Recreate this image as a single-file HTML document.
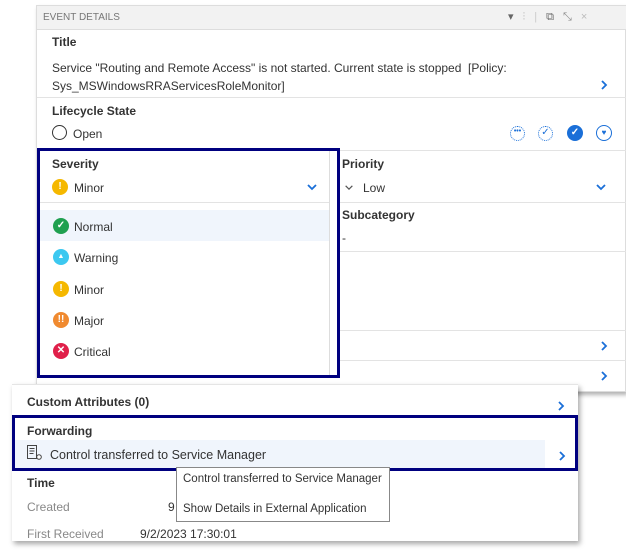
<!DOCTYPE html>
<html><head><style>
*{margin:0;padding:0;box-sizing:border-box}
body{width:626px;height:558px;background:#fff;font-family:"Liberation Sans",sans-serif;font-size:12px;color:#333;position:relative;overflow:hidden}
.abs{position:absolute}
.b{font-weight:bold}
.ic{position:absolute;width:15px;height:15px;border-radius:50%;color:#fff;font-size:10px;font-weight:bold;text-align:center;line-height:15px}
.hl{border-top:1px solid #e3e3e3}
svg.r,svg.d{position:absolute}
</style></head><body>
<svg width="0" height="0" style="position:absolute"><defs>
<symbol id="cr" viewBox="0 0 8 12"><path d="M2 2l4 4-4 4" fill="none" stroke="#1a6fd8" stroke-width="1.8"/></symbol>
<symbol id="cd" viewBox="0 0 12 8"><path d="M2 2l4 4 4-4" fill="none" stroke="#1a6fd8" stroke-width="1.8"/></symbol>
</defs></svg>
<!-- top panel -->
<div class="abs" style="left:36px;top:5px;width:590px;height:387px;background:#fff;border:1px solid #ddd;box-shadow:2px 3px 4px rgba(0,0,0,.3)"></div>
<div class="abs" style="left:37px;top:6px;width:589px;height:24px;background:#f2f2f2;border-bottom:1px solid #ddd"></div>
<div class="abs" style="left:43px;top:12px;font-size:10px;color:#777">EVENT DETAILS</div>
<div class="abs" style="left:508px;top:10px;font-size:11px;color:#666;letter-spacing:9px">▾<span style="color:#bbb">⫶</span><span style="color:#ccc">|</span>⧉<span style="color:#888">⤡</span><span style="color:#bbb">×</span></div>
<div class="abs b" style="left:52px;top:35px">Title</div>
<div class="abs" style="left:52px;top:59px;line-height:18px;width:480px">Service "Routing and Remote Access" is not started. Current state is stopped &nbsp;[Policy: Sys_MSWindowsRRAServicesRoleMonitor]</div>
<svg class="r" style="left:600px;top:79px" width="8" height="12"><use href="#cr"/></svg>
<div class="abs hl" style="left:37px;top:97px;width:589px"></div>
<div class="abs b" style="left:52px;top:104px">Lifecycle State</div>
<div class="abs" style="left:52px;top:125px;width:15px;height:15px;border:1.5px solid #333;border-radius:50%"></div>
<div class="abs" style="left:73px;top:127px">Open</div>
<div class="abs" style="left:510px;top:126px;width:15px;height:15px;border:1.5px dotted #1a6fd8;border-radius:50%;font-size:7px;color:#1a6fd8;text-align:center;line-height:10px;font-weight:bold">•••</div>
<div class="abs" style="left:538px;top:126px;width:15px;height:15px;border:1.5px dotted #1a6fd8;border-radius:50%;font-size:10px;color:#1a6fd8;text-align:center;line-height:12px">✓</div>
<div class="ic" style="left:567px;top:125px;width:16px;height:16px;background:#1a6fd8;line-height:16px">✓</div>
<div class="abs" style="left:596px;top:125px;width:16px;height:16px;border:1.5px solid #1a6fd8;border-radius:50%;font-size:8px;color:#1a6fd8;text-align:center;line-height:13px">♥</div>
<div class="abs hl" style="left:37px;top:150px;width:589px"></div>
<div class="abs b" style="left:342px;top:157px">Priority</div>
<svg class="d" style="left:344px;top:184px" width="10" height="7" viewBox="0 0 12 8"><path d="M2 2l4 4 4-4" fill="none" stroke="#555" stroke-width="1.5"/></svg>
<div class="abs" style="left:363px;top:181px">Low</div>
<svg class="d" style="left:595px;top:183px" width="12" height="8"><use href="#cd"/></svg>
<div class="abs hl" style="left:330px;top:202px;width:296px"></div>
<div class="abs b" style="left:342px;top:208px">Subcategory</div>
<div class="abs" style="left:342px;top:231px">-</div>
<div class="abs hl" style="left:330px;top:251px;width:296px"></div>
<div class="abs hl" style="left:330px;top:330px;width:296px"></div>
<svg class="r" style="left:600px;top:340px" width="8" height="12"><use href="#cr"/></svg>
<div class="abs hl" style="left:330px;top:360px;width:296px"></div>
<svg class="r" style="left:600px;top:370px" width="8" height="12"><use href="#cr"/></svg>
<!-- severity dropdown -->
<div class="abs" style="left:37px;top:148px;width:303px;height:230px;background:#fff;border:3px solid #00007f"></div>
<div class="abs" style="left:329px;top:151px;width:1px;height:224px;background:#ddd"></div>
<div class="abs b" style="left:52px;top:157px">Severity</div>
<div class="ic" style="left:52px;top:179px;width:16px;height:16px;line-height:16px;background:#f5b800">!</div>
<div class="abs" style="left:74px;top:181px">Minor</div>
<svg class="d" style="left:306px;top:183px" width="12" height="8"><use href="#cd"/></svg>
<div class="abs hl" style="left:40px;top:202px;width:289px"></div>
<div class="abs" style="left:40px;top:210px;width:289px;height:31px;background:#f0f5fc"></div>
<div class="ic" style="left:53px;top:218px;width:16px;height:16px;line-height:16px;background:#20a050">✓</div>
<div class="abs" style="left:74px;top:220px">Normal</div>
<div class="ic" style="left:53px;top:249px;width:16px;height:16px;line-height:16px;background:#3cc8f0;font-size:7px">▲</div>
<div class="abs" style="left:74px;top:251px">Warning</div>
<div class="ic" style="left:53px;top:281px;width:16px;height:16px;line-height:16px;background:#f5b800">!</div>
<div class="abs" style="left:74px;top:283px">Minor</div>
<div class="ic" style="left:53px;top:312px;width:16px;height:16px;line-height:16px;background:#f08a30">!!</div>
<div class="abs" style="left:74px;top:314px">Major</div>
<div class="ic" style="left:53px;top:343px;width:16px;height:16px;line-height:16px;background:#e0204a">✕</div>
<div class="abs" style="left:74px;top:345px">Critical</div>
<!-- bottom panel -->
<div class="abs" style="left:12px;top:384px;width:566px;height:157px;background:#fff;box-shadow:2px 3px 5px rgba(0,0,0,.35);border-top:1px solid #e5e5e5"></div>
<div class="abs b" style="left:27px;top:395px">Custom Attributes (0)</div>
<svg class="r" style="left:557px;top:400px" width="8" height="12"><use href="#cr"/></svg>
<div class="abs" style="left:13px;top:440px;width:532px;height:28px;background:#f0f5fc"></div>
<div class="abs" style="left:12px;top:415px;width:566px;height:56px;border:3px solid #00007f"></div>
<div class="abs b" style="left:27px;top:424px">Forwarding</div>
<svg class="abs" style="left:27px;top:445px" width="16" height="16" viewBox="0 0 16 16"><rect x="0.5" y="0.5" width="9" height="13" fill="none" stroke="#444"/><path d="M2.5 3.5h5M2.5 6h5M2.5 8.5h4" stroke="#444"/><circle cx="12" cy="12" r="2.3" fill="#fff" stroke="#444"/></svg>
<div class="abs" style="left:50px;top:448px;font-size:12.5px">Control transferred to Service Manager</div>
<svg class="r" style="left:558px;top:450px" width="8" height="12"><use href="#cr"/></svg>
<div class="abs b" style="left:27px;top:476px">Time</div>
<div class="abs" style="left:27px;top:500px;color:#888">Created</div>
<div class="abs" style="left:168px;top:500px">9</div>
<div class="abs" style="left:27px;top:527px;color:#888">First Received</div>
<div class="abs" style="left:140px;top:527px">9/2/2023 17:30:01</div>
<div class="abs" style="left:176px;top:467px;width:214px;height:55px;background:#fff;border:1px solid #888"></div>
<div class="abs" style="left:183px;top:473px;font-size:11.5px">Control transferred to Service Manager</div>
<div class="abs" style="left:183px;top:503px;font-size:11.5px">Show Details in External Application</div>
</body></html>
